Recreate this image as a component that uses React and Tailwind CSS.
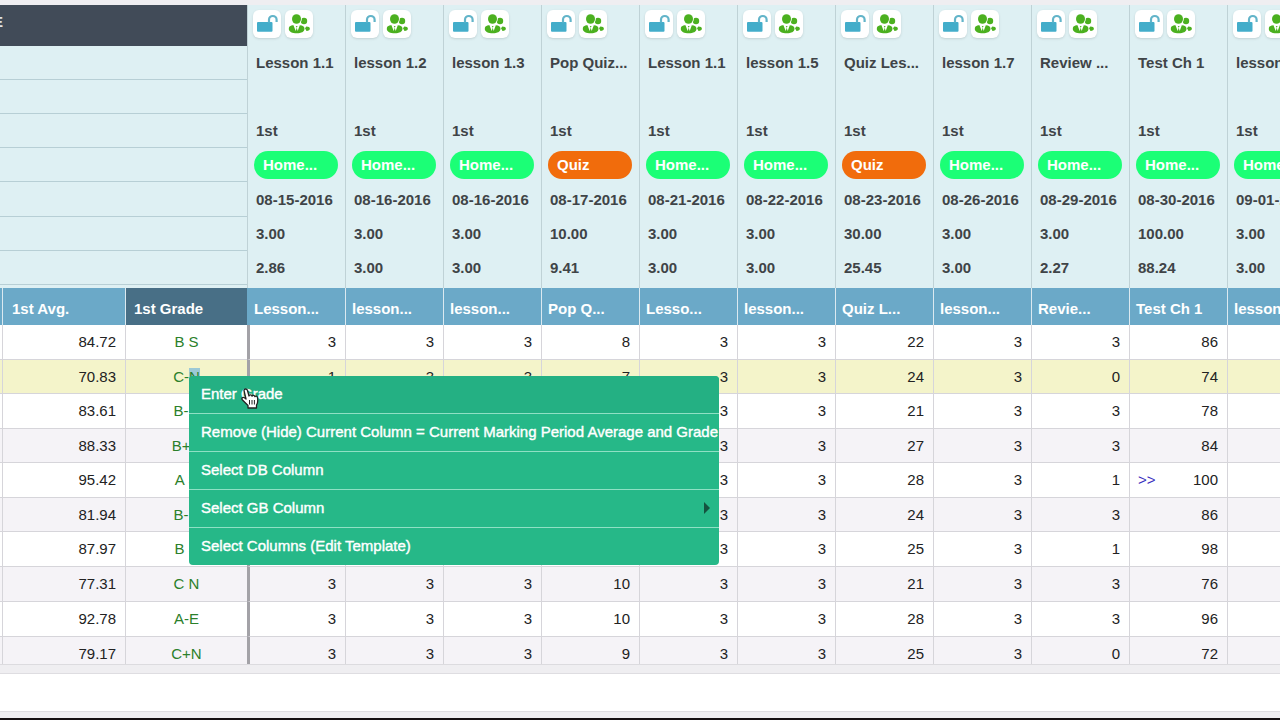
import { useState } from 'react';
import clsx from 'clsx';

const assignments = [
  { name: 'Lesson 1.1', short: 'Lesson...', type: 'Home...', date: '08-15-2016', points: '3.00', average: '2.86' },
  { name: 'lesson 1.2', short: 'lesson...', type: 'Home...', date: '08-16-2016', points: '3.00', average: '3.00' },
  { name: 'lesson 1.3', short: 'lesson...', type: 'Home...', date: '08-16-2016', points: '3.00', average: '3.00' },
  { name: 'Pop Quiz...', short: 'Pop Q...', type: 'Quiz', date: '08-17-2016', points: '10.00', average: '9.41' },
  { name: 'Lesson 1.1', short: 'Lesso...', type: 'Home...', date: '08-21-2016', points: '3.00', average: '3.00' },
  { name: 'lesson 1.5', short: 'lesson...', type: 'Home...', date: '08-22-2016', points: '3.00', average: '3.00' },
  { name: 'Quiz Les...', short: 'Quiz L...', type: 'Quiz', date: '08-23-2016', points: '30.00', average: '25.45' },
  { name: 'lesson 1.7', short: 'lesson...', type: 'Home...', date: '08-26-2016', points: '3.00', average: '3.00' },
  { name: 'Review ...', short: 'Revie...', type: 'Home...', date: '08-29-2016', points: '3.00', average: '2.27' },
  { name: 'Test Ch 1', short: 'Test Ch 1', type: 'Home...', date: '08-30-2016', points: '100.00', average: '88.24' },
  { name: 'lesson 2.1', short: 'lesson...', type: 'Home...', date: '09-01-2016', points: '3.00', average: '3.00' },
];

const students = [
  { avg: '84.72', grade: 'B S', scores: [3, 3, 3, 8, 3, 3, 22, 3, 3, 86, ''] },
  { avg: '70.83', grade: 'C-', selected: 'N', scores: [1, 3, 3, 7, 3, 3, 24, 3, 0, 74, ''] },
  { avg: '83.61', grade: 'B-N', scores: ['', '', '', '', 3, 3, 21, 3, 3, 78, ''] },
  { avg: '88.33', grade: 'B+N', scores: ['', '', '', '', 3, 3, 27, 3, 3, 84, ''] },
  { avg: '95.42', grade: 'A S', scores: ['', '', '', '', 3, 3, 28, 3, 1, 100, ''], flag: 9 },
  { avg: '81.94', grade: 'B-N', scores: ['', '', '', '', 3, 3, 24, 3, 3, 86, ''] },
  { avg: '87.97', grade: 'B S', scores: ['', '', '', '', 3, 3, 25, 3, 1, 98, ''] },
  { avg: '77.31', grade: 'C N', scores: [3, 3, 3, 10, 3, 3, 21, 3, 3, 76, ''] },
  { avg: '92.78', grade: 'A-E', scores: [3, 3, 3, 10, 3, 3, 28, 3, 3, 96, ''] },
  { avg: '79.17', grade: 'C+N', scores: [3, 3, 3, 9, 3, 3, 25, 3, 0, 72, ''] },
];

const menuItems = [
  { label: 'Enter Grade' },
  { label: 'Remove (Hide) Current Column = Current Marking Period Average and Grade' },
  { label: 'Select DB Column' },
  { label: 'Select GB Column', submenu: true },
  { label: 'Select Columns (Edit Template)' },
];

function UnlockIcon() {
  return (
    <svg viewBox="0 0 28 28" className="w-7 h-7" aria-hidden="true">
      <rect x="4" y="12" width="15.500" height="9.800" rx="1" fill="#43adca" />
      <path d="M16 12.500V9.800a3.800 3.800 0 0 1 7.600 0V12" fill="none" stroke="#62b4c9" strokeWidth="2.200" />
    </svg>
  );
}

function StudentsIcon() {
  return (
    <svg viewBox="0 0 28 28" className="w-7 h-7" fill="#4bb01f" aria-hidden="true">
      <circle cx="19" cy="11" r="3.200" />
      <path d="M20 18.200l1.300-1.700c2.300 0 3.600.8 3.600 2.300 0 1.300-1.200 2-3.400 2.200z" />
      <ellipse cx="11.500" cy="9" rx="5.300" ry="5.600" fill="#fff" />
      <ellipse cx="11.500" cy="9" rx="4.500" ry="4.800" />
      <path d="M4.500 16.500c1.200-.9 2.500-1.200 4-1.200l2.200 5.700 1-3.300-.9-1.700h1.800l-.9 1.700 1 3.300 2.100-5.700c3 .2 4.700 1.400 4.700 3.500 0 3-3.200 4.500-7.700 4.500s-8-1.600-8-4.400c0-.9.200-1.700.7-2.400z" />
    </svg>
  );
}

function HandCursor() {
  return (
    <svg viewBox="0 0 20 24" className="w-5 h-6" aria-hidden="true">
      <path
        d="M4 3.500C4 1.500 7 1.500 7.500 3.500L9 9c.3-1.600 2.600-1.500 3 .2.500-1.400 2.500-1.200 2.900.5.700-1 2.300-.6 2.600 1 .5 3 .4 5.300-1 7.500V21H8v-2.500L2.500 13c-1.500-1.700.3-3.400 2-2.200L6 12z"
        fill="#fff"
        stroke="#222"
        strokeWidth="1.300"
        strokeLinejoin="round"
      />
      <path d="M9.500 13v4.500M12 13v4.500M14.400 13v4.500" stroke="#222" strokeWidth="1" />
    </svg>
  );
}

function IconButton({ label, children }) {
  return (
    <button type="button" aria-label={label} className="w-7 h-7 rounded-md bg-white shadow-sm">
      {children}
    </button>
  );
}

// One line of assignment details above the score columns
function DetailRow({ label, field, height = 'h-[34px]', children }) {
  return (
    <tr className={height}>
      <th colSpan={3} scope="row" aria-label={label} className="border-b border-[#b7cfd5]" />
      {assignments.map((item, i) => (
        <td key={i} className="border-l border-[#bfd2d6] pl-2 font-bold text-[#3f4447]">
          {children ? children(item) : item[field]}
        </td>
      ))}
    </tr>
  );
}

function ContextMenu() {
  return (
    <ul role="menu" className="absolute left-[189px] top-[376px] w-[530px] rounded-sm overflow-hidden bg-[#26b888] divide-y divide-[#8fe0c4]">
      {menuItems.map((item, i) => (
        <li key={item.label} role="none">
          <button
            type="button"
            role="menuitem"
            className={clsx(
              'w-full h-[37px] pl-3 pr-2 pb-[2px] flex items-center justify-between whitespace-nowrap text-left text-white',
              i === 0 && 'bg-[#24b083]',
              !item.submenu && 'pr-0!'
            )}
          >
            <span className="[-webkit-text-stroke:0.4px_white]">{item.label}</span>
            {item.submenu && (
              <svg viewBox="0 0 8 12" className="w-2 h-3" aria-hidden="true">
                <path d="M1 0l6 6-6 6z" fill="#14533f" />
              </svg>
            )}
          </button>
        </li>
      ))}
    </ul>
  );
}

export default function App() {
  const [activeRow, setActiveRow] = useState(1);

  return (
    <div className="min-h-screen flex flex-col overflow-hidden bg-[#efeef1] font-['Liberation_Sans',Arial,sans-serif] text-[15px] leading-5 text-[#222]">
      <main className="relative pt-[5px] overflow-hidden">
        <table className="table-fixed w-full border-separate border-spacing-0 [&_td]:py-0 [&_th]:py-0">
          <colgroup>
            <col className="w-[2px]" />
            <col className="w-[123px]" />
            <col className="w-[122px]" />
            {assignments.map((item, i) => (
              <col key={i} className="w-[98px]" />
            ))}
          </colgroup>

          <thead className="bg-[#def0f3] text-left whitespace-nowrap">
            <tr className="h-[41px]">
              <th colSpan={3} className="bg-[#414b58] text-[#dfe3e6] -indent-[7px] overflow-hidden pb-2!">E</th>
              {assignments.map((item, i) => (
                <td key={i} className="border-l border-[#bfd2d6] pl-[5px] pb-1!">
                  <div className="flex gap-1">
                    <IconButton label="Unlock assignment"><UnlockIcon /></IconButton>
                    <IconButton label="Assigned students"><StudentsIcon /></IconButton>
                  </div>
                </td>
              ))}
            </tr>
            <DetailRow label="Assignment" field="name" />
            <DetailRow label="Notes" field="notes" />
            <DetailRow label="Marking period">{() => '1st'}</DetailRow>
            <DetailRow label="Category">
              {(item) => (
                <span
                  className={clsx(
                    'block w-[84px] h-7 -ml-[2px] pl-[9px] rounded-full leading-7 text-white',
                    item.type === 'Quiz' ? 'bg-[#f16c0c]' : 'bg-[#1bff76]'
                  )}
                >
                  {item.type}
                </span>
              )}
            </DetailRow>
            <DetailRow label="Date" field="date" height="h-[35px]" />
            <DetailRow label="Points" field="points" />
            <DetailRow label="Average" field="average" />
            <tr className="h-[3px]">
              <td colSpan={3} />
              {assignments.map((item, i) => (
                <td key={i} className="border-l border-[#bfd2d6]" />
              ))}
            </tr>
            <tr className="h-[37px] bg-[#6ba9c8] text-white [&_th]:pt-1">
              <td />
              <th scope="col" className="border-l border-[#dbe9f0] pl-[9px] pt-1!">1st Avg.</th>
              <th scope="col" className="border-l border-[#dbe9f0] pl-2 pt-1! bg-[#486f86]">1st Grade</th>
              {assignments.map((item, i) => (
                <th key={i} scope="col" className={clsx('border-l pl-[6px] pt-1!', i === 0 ? 'border-[#6ba9c8]' : 'border-[#dbe9f0]')}>
                  {item.short}
                </th>
              ))}
            </tr>
          </thead>

          <tbody>
            {students.map((student, row) => {
              const last = row === students.length - 1;
              const cell = clsx('border-[#d6d5da]', last ? 'align-top pt-[7px]!' : 'border-b');
              return (
                <tr
                  key={row}
                  onClick={() => setActiveRow(row)}
                  className={clsx(
                    last ? 'h-[27px]' : row % 2 === 1 && row < 6 ? 'h-[34px]' : 'h-[35px]',
                    row === activeRow ? 'bg-[#f4f4ca]' : row % 2 === 1 ? 'bg-[#f5f3f7]' : 'bg-white'
                  )}
                >
                  <td className={cell} />
                  <td className={clsx(cell, 'border-l pr-[9px] text-right')}>{student.avg}</td>
                  <td className={clsx(cell, 'border-l text-center text-[#2b802b]')}>
                    {student.grade}
                    {student.selected && <span className="bg-[#9cc9d6]">{student.selected}</span>}
                  </td>
                  {student.scores.map((score, i) => (
                    <td
                      key={i}
                      className={clsx(cell, 'pr-[9px] text-right', i === 0 ? 'border-l-3 border-l-[#a3a2a7]' : 'border-l')}
                    >
                      {student.flag === i ? (
                        <div className="flex justify-between pl-2">
                          <a href="#notes" className="text-[#3a2fc0]">&gt;&gt;</a>
                          {score}
                        </div>
                      ) : (
                        score
                      )}
                    </td>
                  ))}
                </tr>
              );
            })}
          </tbody>
        </table>

        <ContextMenu />
        <div className="absolute left-[240px] top-[387px] pointer-events-none">
          <HandCursor />
        </div>
      </main>

      <footer className="flex-1 flex flex-col border-t border-[#dcdbdf] pt-2">
        <div className="h-[39px] bg-white border-y border-[#dedde1]" />
        <div className="h-[6px]" />
        <div className="flex-1 bg-[#151012]" />
      </footer>
    </div>
  );
}
